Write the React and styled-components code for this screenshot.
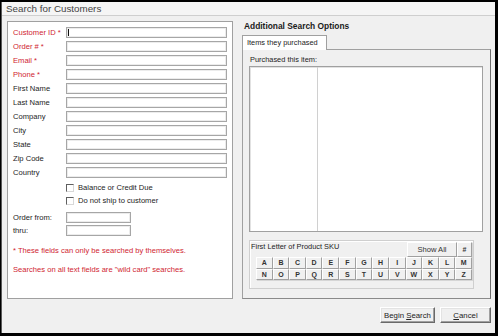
import React from 'react'
import styled, { createGlobalStyle } from 'styled-components'

const GlobalStyle = createGlobalStyle`
    html, body {
        margin: 0;
        padding: 0;
        background: #000;
    }
    * {
        box-sizing: border-box;
    }
`

const Frame = styled.div`
    width: 498px;
    height: 336px;
    background: #000;
    padding: 2px 4px 3px 1px;
    display: flex;
    font-family: "Liberation Sans", Arial, sans-serif;
`

const Window = styled.div`
    flex: 1;
    display: flex;
    flex-direction: column;
    background: #f0f0f0;
    border-left: 1px solid #5a5a5a;
`

const TitleBar = styled.div`
    height: 14px;
    display: flex;
    align-items: center;
    padding-left: 4px;
    background: #f5f5f5;
    border-bottom: 1px solid #cfcfcf;
    font-size: 9.8px;
    color: #444;
`

const Body = styled.div`
    flex: 1;
    display: flex;
    flex-direction: column;
    padding: 5px 4px 0 5px;
`

const Main = styled.div`
    display: flex;
    gap: 9px;
    height: 278px;
`

const LeftPanel = styled.div`
    width: 226px;
    height: 278px;
    background: #fff;
    border: 1px solid #a0a0a0;
    padding: 5px 5px 0 5px;
    display: flex;
    flex-direction: column;
`

const Row = styled.div`
    display: flex;
    align-items: flex-start;
    height: ${p => p.$h || 14}px;
    margin-top: ${p => p.$mt || 0}px;
`

const Label = styled.div`
    width: 53px;
    font-size: 7.6px;
    line-height: 11px;
    color: ${p => (p.$required ? '#d02531' : '#1c1c1c')};
    white-space: nowrap;
`

const TextBox = styled.div`
    position: relative;
    width: ${p => p.$w || 161}px;
    height: 11px;
    background: #fff;
    border: 1px solid #a6a6a6;
    box-shadow: inset 0 0 0 1px #ececec;
`

const Caret = styled.span`
    position: absolute;
    left: 1px;
    top: 1px;
    width: 1px;
    height: 7px;
    background: #111;
`

const CheckRow = styled.label`
    display: flex;
    align-items: center;
    gap: 4px;
    height: 13px;
    padding-left: 53px;
    font-size: 7.6px;
    color: #1c1c1c;
`

const Box = styled.span`
    width: 8px;
    height: 8px;
    background: #fff;
    border: 1px solid;
    border-color: #5f5f5f #d8d8d8 #d8d8d8 #5f5f5f;
`

const Note = styled.div`
    margin-top: ${p => p.$mt}px;
    font-size: 7.6px;
    line-height: 10px;
    color: #d02531;
`

const RightColumn = styled.div`
    width: 249px;
    display: flex;
    flex-direction: column;
`

const Heading = styled.div`
    height: 14px;
    padding-left: 2px;
    font-size: 8.4px;
    font-weight: bold;
    line-height: 11px;
    color: #1a1a1a;
`

const TabStrip = styled.div`
    display: flex;
    height: 14px;
`

const Tab = styled.div`
    width: 85px;
    height: 15px;
    padding-left: 4px;
    background: #fff;
    border: 1px solid #a0a0a0;
    border-bottom: none;
    font-size: 7.4px;
    line-height: 13px;
    color: #222;
    position: relative;
    z-index: 1;
`

const TabPanel = styled.div`
    flex: 1;
    border: 1px solid #a0a0a0;
    border-right-color: #6e6e6e;
    border-bottom-color: #8a8a8a;
    background: #f0f0f0;
    padding: 5px 7px 0 6px;
    display: flex;
    flex-direction: column;
`

const SmallCaption = styled.div`
    height: 11px;
    font-size: 7.4px;
    line-height: 10px;
    color: #222;
    padding-left: 1px;
`

const ListBox = styled.div`
    height: 166px;
    display: flex;
    background: #fff;
    border: 1px solid #a0a0a0;
    box-shadow: inset 1px 1px 0 #e2e2e2;
`

const ListColumn = styled.div`
    width: ${p => (p.$w ? `${p.$w}px` : 'auto')};
    flex: ${p => (p.$w ? 'none' : 1)};
    border-right: ${p => (p.$w ? '1px solid #d0d0d0' : 'none')};
`

const GroupBox = styled.div`
    width: 225px;
    height: 49px;
    margin-top: 8px;
    border: 1px solid #cfcfcf;
    box-shadow: inset 1px 1px 0 #fff;
    padding: 1px 1px 0 1px;
    display: flex;
    flex-direction: column;
`

const GroupHeader = styled.div`
    display: flex;
    align-items: flex-start;
    height: 15px;
`

const GroupLabel = styled.div`
    flex: 1;
    font-size: 7.4px;
    line-height: 10px;
    color: #222;
`

const KeyButton = styled.button`
    width: ${p => p.$w || 16}px;
    height: ${p => p.$h || 12}px;
    padding: 0;
    margin: 0;
    background: #f0f0f0;
    border: 1px solid;
    border-color: #fff #a0a0a0 #a0a0a0 #fff;
    box-shadow: 1px 1px 0 #d6d6d6;
    font-family: "Liberation Sans", Arial, sans-serif;
    font-size: ${p => p.$fs || 7}px;
    font-weight: ${p => (p.$plain ? 'normal' : 'bold')};
    color: #333;
    line-height: 1;
`

const LetterGrid = styled.div`
    display: grid;
    grid-template-columns: repeat(13, 1fr);
    grid-auto-rows: 11.5px;
    width: 216px;
    margin-left: 5px;

    & > button {
        width: 100%;
        height: 100%;
    }
`

const Footer = styled.div`
    display: flex;
    justify-content: flex-end;
    gap: 5px;
    padding-top: 8px;
`

const DialogButton = styled.button`
    width: ${p => p.$w}px;
    height: 16px;
    padding: 0;
    background: #f0f0f0;
    border: 1px solid;
    border-color: #fff #6a6a6a #6a6a6a #fff;
    box-shadow: inset -1px -1px 0 #a0a0a0, inset 1px 1px 0 #e3e3e3;
    font-family: "Liberation Sans", Arial, sans-serif;
    font-size: 7.8px;
    color: #222;
`

const U = styled.span`
    text-decoration: underline;
`

const fields = [
    { label: 'Customer ID *', required: true, caret: true },
    { label: 'Order # *', required: true },
    { label: 'Email *', required: true },
    { label: 'Phone *', required: true },
    { label: 'First Name' },
    { label: 'Last Name' },
    { label: 'Company' },
    { label: 'City' },
    { label: 'State' },
    { label: 'Zip Code' },
    { label: 'Country' },
]

const letters = 'ABCDEFGHIJKLMNOPQRSTUVWXYZ'.split('')

const App = () => {
    return (
        <>
        <GlobalStyle />
        <Frame>
            <Window>
                <TitleBar>Search for Customers</TitleBar>
                <Body>
                    <Main>
                        <LeftPanel>
                            {fields.map(f => (
                                <Row key={f.label}>
                                    <Label $required={f.required}>{f.label}</Label>
                                    <TextBox>{f.caret && <Caret />}</TextBox>
                                </Row>
                            ))}
                            <CheckRow>
                                <Box />
                                Balance or Credit Due
                            </CheckRow>
                            <CheckRow>
                                <Box />
                                Do not ship to customer
                            </CheckRow>
                            <Row $h={13} $mt={5}>
                                <Label>Order from:</Label>
                                <TextBox $w={65} />
                            </Row>
                            <Row $h={13}>
                                <Label>thru:</Label>
                                <TextBox $w={65} />
                            </Row>
                            <Note $mt={8}>* These fields can only be searched by themselves.</Note>
                            <Note $mt={9}>Searches on all text fields are "wild card" searches.</Note>
                        </LeftPanel>
                        <RightColumn>
                            <Heading>Additional Search Options</Heading>
                            <TabStrip>
                                <Tab>Items they purchased</Tab>
                            </TabStrip>
                            <TabPanel>
                                <SmallCaption>Purchased this item:</SmallCaption>
                                <ListBox>
                                    <ListColumn $w={68} />
                                    <ListColumn />
                                </ListBox>
                                <GroupBox>
                                    <GroupHeader>
                                        <GroupLabel>First Letter of Product SKU</GroupLabel>
                                        <KeyButton $w={50} $h={15} $fs={7.6} $plain>Show All</KeyButton>
                                        <KeyButton $w={15} $h={15}>#</KeyButton>
                                    </GroupHeader>
                                    <LetterGrid>
                                        {letters.map(l => (
                                            <KeyButton key={l}>{l}</KeyButton>
                                        ))}
                                    </LetterGrid>
                                </GroupBox>
                            </TabPanel>
                        </RightColumn>
                    </Main>
                    <Footer>
                        <DialogButton $w={55}>Begin <U>S</U>earch</DialogButton>
                        <DialogButton $w={51}><U>C</U>ancel</DialogButton>
                    </Footer>
                </Body>
            </Window>
        </Frame>
        </>
    )
}

export default App
